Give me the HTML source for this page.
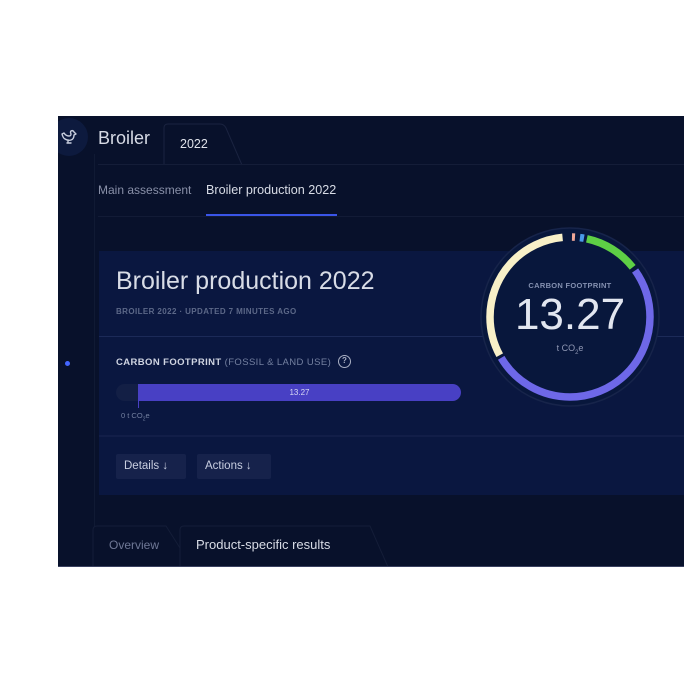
<!DOCTYPE html>
<html><head><meta charset="utf-8"><style>
*{margin:0;padding:0;box-sizing:border-box}
body{width:684px;height:684px;background:#fff;position:relative;overflow:hidden;font-family:"Liberation Sans",sans-serif}
.panel{position:absolute;left:58px;top:116px;width:626px;height:451px;background:#08112b;overflow:hidden}
.abs{position:absolute}
.t{color:#d8dbe6}
</style></head><body>
<div class="panel">
  <div class="abs" style="left:36px;top:38px;width:1px;height:420px;background:#101a34"></div>
  <div class="abs" style="left:-8px;top:2px;width:38px;height:38px;border-radius:50%;background:#0d1a3e"></div>
  <svg class="abs" style="left:2px;top:12px" width="18" height="18" viewBox="0 0 18 18" fill="none" stroke="#c8cede" stroke-width="1.4" stroke-linejoin="round" stroke-linecap="round">
    <path d="M2 6 Q3 10 5 11 Q8 13 11 12 Q14 11 14 7 L16 6 L14 4 Q13 2 11 3 Q10 4 11 6 Q11 8 9 8 Q6 8 4 5 Z"/>
    <path d="M8 12 V15 M7 15 H11"/>
  </svg>
  <div class="abs" style="left:7px;top:245px;width:5px;height:5px;border-radius:50%;background:#4466ff"></div>
  <div class="abs t" style="left:40px;top:12px;font-size:18px;color:#d6dae5">Broiler</div>
  <svg class="abs" style="left:100px;top:6px" width="90" height="44"><path d="M6 43 V6 Q6 2 10 2 H62 Q66 2 68 6 L84 43" fill="#08112b" stroke="#1a2340" stroke-width="1"/></svg>
  <div class="abs t" style="left:122px;top:21px;font-size:12.5px;color:#dfe2ea">2022</div>
  <div class="abs" style="left:40px;top:48px;width:600px;height:1px;background:#141d38"></div>
  <div class="abs" style="left:40px;top:67px;font-size:12px;color:#8990a8">Main assessment</div>
  <div class="abs" style="left:148px;top:67px;font-size:12.6px;color:#d8dce6">Broiler production 2022</div>
  <div class="abs" style="left:148px;top:98px;width:131px;height:2px;background:#3a55e8"></div>
  <div class="abs" style="left:40px;top:100px;width:600px;height:1px;background:#121b36"></div>
  <div class="abs" style="left:41px;top:135px;width:600px;height:244px;background:#0a1740"></div>
  <div class="abs" style="left:58px;top:151px;font-size:25px;color:#d8dce6">Broiler production 2022</div>
  <div class="abs" style="left:58px;top:191px;font-size:8px;font-weight:bold;color:#5c6888;letter-spacing:.4px">BROILER 2022 · UPDATED 7 MINUTES AGO</div>
  <div class="abs" style="left:41px;top:220px;width:600px;height:1px;background:#1c2a58"></div>
  <div class="abs" style="left:58px;top:241px;font-size:9.5px;font-weight:bold;color:#d0d5e2;letter-spacing:.4px">CARBON FOOTPRINT <span style="color:#7480a0;font-weight:normal">(FOSSIL &amp; LAND USE)</span></div>
  <div class="abs" style="left:280px;top:239px;width:13px;height:13px;border:1.5px solid #aab0c4;border-radius:50%;color:#aab0c4;font-size:8px;text-align:center;line-height:10px;font-weight:bold">?</div>
  <div class="abs" style="left:58px;top:268px;width:345px;height:17px;border-radius:9px;background:#131f45"></div>
  <div class="abs" style="left:80px;top:268px;width:323px;height:17px;border-radius:0 9px 9px 0;background:#4840c4;color:#d8d8f4;font-size:8px;text-align:center;line-height:17px">13.27</div>
  <div class="abs" style="left:80px;top:268px;width:1px;height:24px;background:#4840c4"></div>
  <div class="abs" style="left:63px;top:295px;font-size:7.5px;color:#7480a0">0 t CO<sub style="font-size:5px">2</sub>e</div>
  <div class="abs" style="left:41px;top:319px;width:600px;height:2px;background:#121e48"></div>
  <div class="abs" style="left:58px;top:338px;width:70px;height:25px;background:#16224b;border-radius:2px;color:#c8cee0;font-size:11.5px;line-height:25px;padding-left:8px">Details ↓</div>
  <div class="abs" style="left:139px;top:338px;width:74px;height:25px;background:#16224b;border-radius:2px;color:#c8cee0;font-size:11.5px;line-height:25px;padding-left:8px">Actions ↓</div>
  <svg class="abs" style="left:30px;top:400px" width="300" height="51"><path d="M5 51 V14 Q5 10 9 10 H78 L92 32 V51" fill="#08112b" stroke="#141d38"/><path d="M92 51 V14 Q92 10 96 10 H282 L300 51" fill="#08112b" stroke="#141d38"/></svg>
  <div class="abs" style="left:51px;top:422px;font-size:12px;color:#6f7896">Overview</div>
  <div class="abs" style="left:138px;top:421px;font-size:13px;color:#d8dce6">Product-specific results</div>
  <div class="abs" style="left:0;top:450px;width:626px;height:1px;background:#3a4160"></div>
  <svg class="abs" style="left:422px;top:111px" width="180" height="180" viewBox="0 0 180 180">
    <circle cx="90" cy="90" r="89" fill="#08173c" stroke="#17244a" stroke-width="1.5"/>
    <g transform="rotate(-90 90 90)" fill="none" stroke-width="7.5">
      <circle cx="90" cy="90" r="80" stroke="#5ecf45" stroke-dasharray="55 448" stroke-dashoffset="-17"/>
      <circle cx="90" cy="90" r="80" stroke="#6e68e8" stroke-dasharray="258 245" stroke-dashoffset="-76"/>
      <circle cx="90" cy="90" r="80" stroke="#f8f0c8" stroke-dasharray="158 345" stroke-dashoffset="-337"/>
      <circle cx="90" cy="90" r="80" stroke="#f0a898" stroke-dasharray="3 500" stroke-dashoffset="-2"/>
      <circle cx="90" cy="90" r="80" stroke="#4a9ae8" stroke-dasharray="4 499" stroke-dashoffset="-10"/>
    </g>
  </svg>
  <div class="abs" style="left:452px;top:165px;width:120px;text-align:center;font-size:7.5px;font-weight:bold;color:#8490b0;letter-spacing:.3px">CARBON FOOTPRINT</div>
  <div class="abs" style="left:432px;top:174px;width:160px;text-align:center;font-size:44px;color:#e2e6f0">13.27</div>
  <div class="abs" style="left:452px;top:227px;width:120px;text-align:center;font-size:9px;color:#9098b4">t CO<sub style="font-size:6px">2</sub>e</div>
</div>
</body></html>
